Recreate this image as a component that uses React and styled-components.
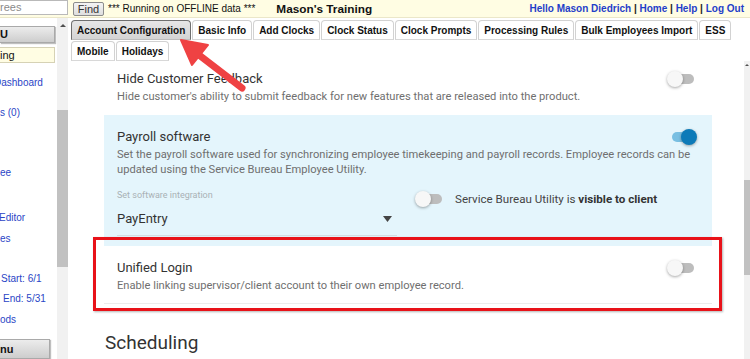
import React from 'react';
import styled, { createGlobalStyle } from 'styled-components';

const Global = createGlobalStyle`
  html, body { margin: 0; padding: 0; width: 750px; height: 359px; overflow: hidden; background: #fff; }
  #root { width: 750px; height: 359px; }
  * { box-sizing: border-box; }
`;

const Page = styled.div`
  position: relative;
  width: 750px;
  height: 359px;
  display: flex;
  flex-direction: column;
  overflow: hidden;
  font-family: "Liberation Sans", Arial, sans-serif;
`;

/* ---------- top bar ---------- */
const TopBar = styled.div`
  flex: 0 0 18px;
  height: 18px;
  background: #fffde3;
  border-bottom: 1px solid #ebe7c9;
  display: flex;
  align-items: center;
  font-size: 10px;
  color: #111;
`;

const SearchBox = styled.div`
  align-self: flex-start;
  width: 68px;
  height: 15px;
  background: #fff;
  border: 1px solid #b9b9b9;
  border-left: none;
  color: #8a8a8a;
  font-size: 11px;
  line-height: 13px;
  overflow: hidden;
  white-space: nowrap;
`;

const FindButton = styled.div`
  margin-left: 5px;
  width: 31px;
  height: 14px;
  border: 1px solid #8c8c8c;
  border-radius: 2px;
  background: linear-gradient(#f4f4f4, #dedede);
  font-size: 11px;
  line-height: 12px;
  text-align: center;
  color: #333;
  margin-top: 1px;
`;

const Offline = styled.span`
  margin-left: 4px;
  font-size: 10px;
`;

const SiteTitle = styled.span`
  margin-left: 21px;
  font-size: 11.8px;
  font-weight: bold;
  color: #111;
`;

const UserLinks = styled.div`
  margin-left: auto;
  margin-right: 6px;
  font-size: 10px;
  font-weight: bold;
  color: #222;
  white-space: nowrap;
`;

const Link = styled.span`
  color: #1f3fc9;
`;

/* ---------- main ---------- */
const Main = styled.div`
  flex: 1;
  display: flex;
  min-height: 0;
`;

const Sidebar = styled.div`
  width: 57px;
  flex: 0 0 57px;
  display: flex;
  flex-direction: column;
  overflow: hidden;
  font-size: 10px;
`;

const MenuButton = styled.div`
  margin-top: ${p => p.$mt}px;
  width: ${p => p.$w}px;
  height: ${p => p.$h}px;
  background: linear-gradient(#ececec, #cdcdcd);
  border: 1px solid #a9a9a9;
  border-left: none;
  box-shadow: 1px 1px 1px rgba(0,0,0,0.25);
  font-weight: bold;
  font-size: 11px;
  line-height: ${p => p.$h - 2}px;
  color: #111;
`;

const CompanyBox = styled.div`
  margin-top: 4px;
  width: 55px;
  height: 16px;
  background: #fffde3;
  border: 1px solid #d6d2b5;
  border-left: none;
  font-size: 11px;
  line-height: 14px;
  color: #111;
`;

const SideLink = styled.div`
  margin-top: ${p => p.$mt}px;
  margin-left: ${p => p.$ml || 0}px;
  height: 14px;
  line-height: 14px;
  white-space: nowrap;
  color: #2a45c6;
  font-size: 10px;
`;

const SideRule = styled.div`
  margin-top: ${p => p.$mt}px;
  width: 50px;
  height: 1px;
  background: #b9b9b9;
`;

const ScrollTrack = styled.div`
  width: ${p => p.$w}px;
  flex: 0 0 ${p => p.$w}px;
  background: #f1f1f1;
  display: flex;
  flex-direction: column;
  align-items: center;
`;

const ScrollArrow = styled.div`
  margin-top: ${p => p.$mt}px;
  width: 0;
  height: 0;
  border-left: ${p => p.$s}px solid transparent;
  border-right: ${p => p.$s}px solid transparent;
  border-bottom: ${p => p.$s}px solid #505050;
`;

const ScrollThumb = styled.div`
  margin-top: ${p => p.$mt}px;
  width: 100%;
  height: ${p => p.$h}px;
  background: #c1c1c1;
`;

const Content = styled.div`
  flex: 1;
  display: flex;
  flex-direction: column;
  min-width: 0;
`;

const TabRow = styled.div`
  display: flex;
  padding-left: 3px;
  margin-top: ${p => p.$mt}px;
`;

const Tab = styled.div`
  height: 20px;
  padding: 0 5px;
  margin-right: 1px;
  display: flex;
  align-items: center;
  white-space: nowrap;
  font-size: 10px;
  font-weight: bold;
  color: #111;
  border: 1px solid ${p => (p.$active ? '#6f6f6f' : '#d2d2d2')};
  border-bottom-color: ${p => (p.$active ? '#bdbdbd' : '#d8d8d8')};
  border-radius: 4px 4px 0 0;
  background: ${p => (p.$active ? 'linear-gradient(#e6e6e6, #d4d4d4)' : '#fff')};
`;

const Body = styled.div`
  flex: 1;
  display: flex;
  min-height: 0;
`;

const Scroller = styled.div`
  flex: 1;
  overflow: hidden;
  padding: 0 32px 0 36px;
  font-family: Roboto, "Liberation Sans", sans-serif;
`;

const SettingRow = styled.div`
  padding: ${p => p.$pad};
  background: ${p => p.$bg || 'transparent'};
  border-bottom: ${p => (p.$line ? '1px solid #ececec' : 'none')};
`;

const RowHead = styled.div`
  display: flex;
  justify-content: space-between;
  align-items: flex-start;
  padding-right: ${p => p.$pr || 0}px;
`;

const Title = styled.div`
  font-size: 13px;
  line-height: 16px;
  color: #333;
`;

const Desc = styled.div`
  margin-top: 2px;
  font-size: 11.15px;
  line-height: 15px;
  color: #6f6f6f;
`;

const IntegrationRow = styled.div`
  margin-top: 12px;
  display: flex;
  align-items: flex-start;
`;

const SelectField = styled.div`
  width: 280px;
  padding-bottom: 8px;
  border-bottom: 1px solid #d3dde2;
`;

const FieldLabel = styled.div`
  font-size: 9px;
  line-height: 12px;
  color: #a9b1b5;
`;

const FieldValue = styled.div`
  margin-top: 10px;
  display: flex;
  justify-content: space-between;
  align-items: center;
  font-size: 13px;
  line-height: 16px;
  color: #333;
  padding-right: 5px;
`;

const VisibleOption = styled.div`
  margin-left: 18px;
  margin-top: 2px;
  display: flex;
  align-items: center;
  font-size: 11.6px;
  color: #444;
  b { font-weight: 700; color: #333; }
`;

const OptionText = styled.span`
  margin-left: 12px;
`;

const SwitchWrap = styled.div`
  position: relative;
  flex: 0 0 28px;
  width: 28px;
  height: 16px;
  &::before {
    content: '';
    position: absolute;
    left: 3px;
    right: 1px;
    top: 3px;
    height: 10px;
    border-radius: 5px;
    background: ${p => (p.$on ? '#79bfe2' : '#bdbdbd')};
  }
`;

const Knob = styled.div`
  position: absolute;
  top: 0;
  left: ${p => (p.$on ? '12px' : '0')};
  width: 16px;
  height: 16px;
  border-radius: 50%;
  background: ${p => (p.$on ? '#0c7ab8' : '#f7f7f7')};
  box-shadow: 0 1px 3px rgba(0,0,0,0.35);
`;

const Switch = ({ on }) => (
  <SwitchWrap $on={on}>
    <Knob $on={on} />
  </SwitchWrap>
);

const SectionHeading = styled.div`
  margin-top: 28px;
  padding-left: 1px;
  font-size: 19px;
  line-height: 22px;
  color: #333;
`;

const Highlight = styled.div`
  position: absolute;
  left: 93px;
  top: 237px;
  width: 629px;
  height: 74px;
  border: 3px solid #e81219;
  box-shadow: 1px 1px 2px rgba(0,0,0,0.3);
  pointer-events: none;
`;

const ArrowSvg = styled.svg`
  position: absolute;
  left: 0;
  top: 0;
  pointer-events: none;
`;

const tabs1 = ['Account Configuration', 'Basic Info', 'Add Clocks', 'Clock Status', 'Clock Prompts', 'Processing Rules', 'Bulk Employees Import', 'ESS'];
const tabs2 = ['Mobile', 'Holidays'];

export default function App() {
  return (
    <Page>
      <Global />
      <TopBar>
        <SearchBox>rees</SearchBox>
        <FindButton>Find</FindButton>
        <Offline>*** Running on OFFLINE data ***</Offline>
        <SiteTitle>Mason's Training</SiteTitle>
        <UserLinks>
          <Link>Hello Mason Diedrich</Link> | <Link>Home</Link> | <Link>Help</Link> | <Link>Log Out</Link>
        </UserLinks>
      </TopBar>
      <Main>
        <Sidebar>
          <MenuButton $mt={8} $w={55} $h={17}>U</MenuButton>
          <CompanyBox>ing</CompanyBox>
          <SideLink $mt={13} $ml={-6}>Dashboard</SideLink>
          <SideLink $mt={16}>s (0)</SideLink>
          <SideLink $mt={46}>ee</SideLink>
          <SideRule $mt={7} />
          <SideLink $mt={24} $ml={-1}>Editor</SideLink>
          <SideLink $mt={7}>es</SideLink>
          <SideLink $mt={26} $ml={1}>Start: 6/1</SideLink>
          <SideLink $mt={6} $ml={3}>End: 5/31</SideLink>
          <SideLink $mt={7}>ods</SideLink>
          <SideRule $mt={6} />
          <MenuButton $mt={6} $w={50} $h={20}>nu</MenuButton>
        </Sidebar>
        <ScrollTrack $w={11}>
          <ScrollArrow $mt={6} $s={3} />
          <ScrollThumb $mt={83} $h={157} />
        </ScrollTrack>
        <Content>
          <TabRow $mt={2}>
            {tabs1.map((t, i) => (
              <Tab key={t} $active={i === 0}>{t}</Tab>
            ))}
          </TabRow>
          <TabRow $mt={1}>
            {tabs2.map(t => (
              <Tab key={t}>{t}</Tab>
            ))}
          </TabRow>
          <Body>
            <Scroller>
              <SettingRow $pad="10px 17px 11px 13px">
                <RowHead>
                  <Title>Hide Customer Feedback</Title>
                  <Switch />
                </RowHead>
                <Desc>Hide customer's ability to submit feedback for new features that are released into the product.</Desc>
              </SettingRow>
              <SettingRow $pad="14px 13px 10px" $bg="#e4f5fc">
                <RowHead $pr={2}>
                  <Title>Payroll software</Title>
                  <Switch on />
                </RowHead>
                <Desc>
                  Set the payroll software used for synchronizing employee timekeeping and payroll records. Employee records can be updated using the Service Bureau Employee Utility.
                </Desc>
                <IntegrationRow>
                  <SelectField>
                    <FieldLabel>Set software integration</FieldLabel>
                    <FieldValue>
                      PayEntry
                      <svg width="9" height="6" viewBox="0 0 9 6">
                        <path d="M0 0 L9 0 L4.5 6 Z" fill="#444" />
                      </svg>
                    </FieldValue>
                  </SelectField>
                  <VisibleOption>
                    <Switch />
                    <OptionText>
                      Service Bureau Utility is <b>visible to client</b>
                    </OptionText>
                  </VisibleOption>
                </IntegrationRow>
              </SettingRow>
              <SettingRow $pad="14px 17px 10px 13px" $line>
                <RowHead>
                  <Title>Unified Login</Title>
                  <Switch />
                </RowHead>
                <Desc>Enable linking supervisor/client account to their own employee record.</Desc>
              </SettingRow>
              <SectionHeading>Scheduling</SectionHeading>
            </Scroller>
            <ScrollTrack $w={6}>
              <ScrollArrow $mt={3} $s={2} />
              <ScrollThumb $mt={114} $h={95} />
            </ScrollTrack>
          </Body>
        </Content>
      </Main>
      <Highlight />
      <ArrowSvg width="750" height="359" viewBox="0 0 750 359">
        <line x1="199" y1="55" x2="242" y2="88" stroke="#ef4243" strokeWidth="7" strokeLinecap="round" />
        <polygon points="181,40 208,45 192,65" fill="#ef4243" strokeLinejoin="round" stroke="#ef4243" strokeWidth="2" />
      </ArrowSvg>
    </Page>
  );
}
